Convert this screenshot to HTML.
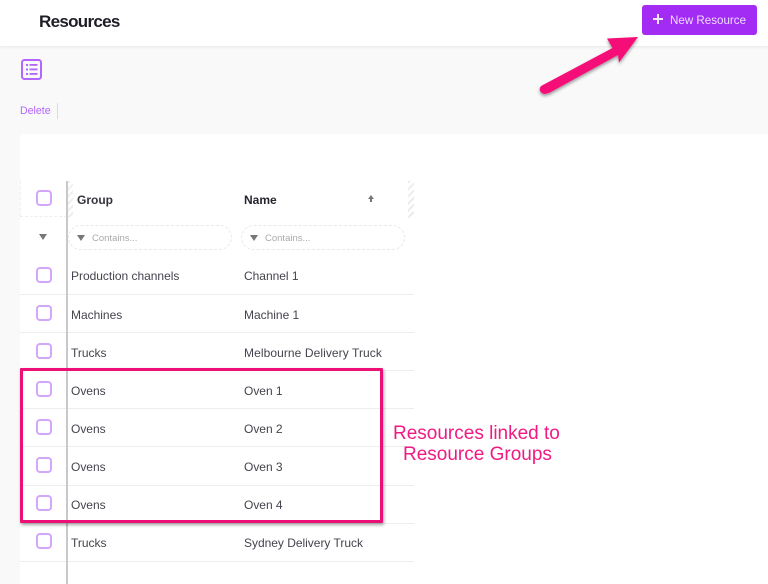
<!DOCTYPE html>
<html><head><meta charset="utf-8"><style>
html,body{margin:0;padding:0}
body{width:768px;height:584px;position:relative;overflow:hidden;background:#f9f9fa;font-family:"Liberation Sans",sans-serif;color:#3a3a45}
.a{position:absolute;white-space:nowrap}
.cb{position:absolute;left:36px;width:12px;height:12px;border:2px solid #d3a6fb;border-radius:4px;background:#fff}
.l{position:absolute;left:20px;width:394px;height:1px;background:#eeeeef}
.t{position:absolute;font-size:12px;line-height:16px;white-space:nowrap;color:#44444e;letter-spacing:-.02px}
.f{position:absolute;top:225px;height:25px;border:1px dashed #e8e8ea;border-radius:13px;box-sizing:border-box}
.f span{position:absolute;left:23px;top:6.5px;font-size:9.5px;line-height:12px;color:#aaa}
.tri{position:absolute;width:0;height:0;border-left:4px solid transparent;border-right:4px solid transparent;border-top:6px solid #777}
</style></head><body>
<div class="a" style="left:0;top:0;width:768px;height:46px;background:#fff;box-shadow:0 1px 3px rgba(0,0,0,.08)"></div>
<div class="a" style="left:39px;top:11px;font-size:17px;line-height:22px;font-weight:bold;color:#1e1e28;letter-spacing:-.7px">Resources</div>
<div class="a" style="left:642px;top:5px;width:115px;height:30px;background:#a32cf5;border-radius:3px"></div>
<div class="a" style="left:653px;top:18px;width:10px;height:2px;background:#f3e6ff"></div>
<div class="a" style="left:657px;top:14px;width:2px;height:10px;background:#f3e6ff"></div>
<div class="a" style="left:670px;top:13px;color:#ecdcff;font-size:11.6px;line-height:15px">New Resource</div>

<div class="a" style="left:20px;top:104px;font-size:10.6px;line-height:14px;color:#b366fb">Delete</div>
<div class="a" style="left:57px;top:103px;width:1px;height:16px;background:#dcdcde"></div>

<div class="a" style="left:20px;top:134px;width:748px;height:450px;background:#fff;border-radius:4px 0 0 0"></div>
<div class="a" style="left:20px;top:216px;width:47px;border-top:1px dashed #eeeeef"></div>
<div class="a" style="left:20px;top:181px;height:35px;border-left:1px dashed #efeff0"></div>
<div class="a" style="left:408px;top:181px;width:6px;height:37px;background:repeating-linear-gradient(135deg,#ececee 0 2px,#fff 2px 5px)"></div>
<div class="a" style="left:68px;top:181px;width:5px;height:37px;background:repeating-linear-gradient(135deg,#efeff0 0 2px,#fff 2px 5px)"></div>

<div class="l" style="top:294px"></div><div class="l" style="top:332px"></div><div class="l" style="top:370px"></div><div class="l" style="top:408px"></div><div class="l" style="top:446px"></div><div class="l" style="top:485px"></div><div class="l" style="top:523px"></div><div class="l" style="top:561px"></div>
<div class="a" style="left:66px;top:181px;width:2px;height:403px;background:#c8c8ca"></div>

<div class="cb" style="top:190px"></div>
<div class="a" style="left:77px;top:192px;font-size:12px;line-height:16px;font-weight:bold;color:#35353f">Group</div>
<div class="a" style="left:244px;top:192px;font-size:12px;line-height:16px;font-weight:bold;color:#25252f">Name</div>
<div class="tri" style="left:368px;top:195px;border-top:0;border-bottom:4px solid #777;border-left-width:3px;border-right-width:3px"></div>
<div class="a" style="left:370px;top:198px;width:2px;height:4px;background:#777"></div>

<div class="tri" style="left:39px;top:234px"></div>
<div class="f" style="left:68px;width:164px"><i class="tri" style="left:8px;top:9px"></i><span>Contains...</span></div>
<div class="f" style="left:241px;width:164px"><i class="tri" style="left:8px;top:9px"></i><span>Contains...</span></div>

<div class="cb" style="top:267px"></div><div class="t" style="left:71px;top:268px">Production channels</div><div class="t" style="left:244px;top:268px">Channel 1</div>
<div class="cb" style="top:305px"></div><div class="t" style="left:71px;top:307px">Machines</div><div class="t" style="left:244px;top:307px">Machine 1</div>
<div class="cb" style="top:343px"></div><div class="t" style="left:71px;top:345px">Trucks</div><div class="t" style="left:244px;top:345px;letter-spacing:.08px">Melbourne Delivery Truck</div>
<div class="cb" style="top:381px"></div><div class="t" style="left:71px;top:383px">Ovens</div><div class="t" style="left:244px;top:383px">Oven 1</div>
<div class="cb" style="top:419px"></div><div class="t" style="left:71px;top:421px">Ovens</div><div class="t" style="left:244px;top:421px">Oven 2</div>
<div class="cb" style="top:457px"></div><div class="t" style="left:71px;top:459px">Ovens</div><div class="t" style="left:244px;top:459px">Oven 3</div>
<div class="cb" style="top:495px"></div><div class="t" style="left:71px;top:497px">Ovens</div><div class="t" style="left:244px;top:497px">Oven 4</div>
<div class="cb" style="top:533px"></div><div class="t" style="left:71px;top:535px">Trucks</div><div class="t" style="left:244px;top:535px">Sydney Delivery Truck</div>

<svg class="a" style="left:0;top:0" width="768" height="584">
<defs><filter id="s" x="-20%" y="-20%" width="140%" height="140%"><feDropShadow dx="0" dy="2" stdDeviation="1.5" flood-color="#000" flood-opacity=".4"/></filter></defs>
<path filter="url(#s)" fill="#f50f78" d="M638 37L607 38.5L612.5 48L542 85.5C538.5 87.5 539 93 544.500 94L549 93L618 55L619 62.500Z"/>
<rect x="22" y="60" width="19" height="19" rx="2.5" fill="none" stroke="#b366fb" stroke-width="2"/>
<g fill="#b366fb"><rect x="26" y="64" width="2" height="2"/><rect x="26" y="68.500" width="2" height="2"/><rect x="26" y="73" width="2" height="2"/>
<rect x="29.500" y="64" width="8" height="1.800"/><rect x="29.500" y="68.500" width="8" height="1.800"/><rect x="29.500" y="73" width="8" height="1.800"/></g>
</svg>

<div class="a" style="left:20px;top:368px;width:357px;height:149px;border:3px solid #ec0f76;border-radius:1px;box-shadow:1px 2px 3px rgba(0,0,0,.35)"></div>
<div class="a" style="left:393px;top:423px;font-size:19px;line-height:22px;color:#f01a84">Resources linked to</div>
<div class="a" style="left:403px;top:444px;font-size:19px;line-height:22px;color:#f01a84">Resource Groups</div>
</body></html>
